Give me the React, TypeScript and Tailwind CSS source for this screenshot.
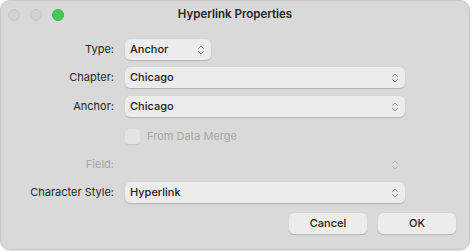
import React from "react";

const Chevrons = ({ muted = false }: { muted?: boolean }) => (
  <svg width="8" height="12" viewBox="0 0 8 12" className={muted ? "text-[#b8b8b8]" : "text-[#8a8a8a]"}>
    <path d="M1.5 4.5 L4 2 L6.5 4.5" fill="none" stroke="currentColor" strokeWidth="1" strokeLinecap="round" strokeLinejoin="round" />
    <path d="M1.5 7.5 L4 10 L6.5 7.5" fill="none" stroke="currentColor" strokeWidth="1" strokeLinecap="round" strokeLinejoin="round" />
  </svg>
);

const Popup = ({ value, wide = true }: { value: string; wide?: boolean }) => (
  <div
    className={`flex h-[21px] items-center justify-between rounded-[5px] bg-[#ececec] pl-[5px] pr-[6px] shadow-[0_0.5px_1px_rgba(0,0,0,0.18)] ${
      wide ? "w-[280px]" : "w-[86px]"
    }`}
  >
    <span className="text-[11px] font-medium text-[#222]">{value}</span>
    <Chevrons />
  </div>
);

const Row = ({ label, muted = false, children, className = "" }: { label: string; muted?: boolean; children: React.ReactNode; className?: string }) => (
  <div className={`flex h-[21px] items-center ${className}`}>
    <div className={`w-[114px] pr-[1px] text-right text-[11px] ${muted ? "text-[#a6a6a6]" : "text-[#262626]"}`}>{label}</div>
    <div className="ml-[10px] flex items-center">{children}</div>
  </div>
);

export default function App() {
  return (
    <div className="h-[252px] w-[474px] bg-white" style={{ fontFamily: "Inter, 'Liberation Sans', sans-serif" }}>
      <div className="flex h-[250px] w-[470px] flex-col rounded-[10px] border border-[#c8c8c8] bg-[#d9d9d9] shadow-[0_1px_2px_rgba(0,0,0,0.12)]">
        {/* title bar */}
        <div className="relative flex h-[28px] items-center justify-center">
          <div className="absolute left-[7px] top-[8px] flex gap-[10px]">
            <span className="h-[12px] w-[12px] rounded-full border border-[#c6c6c6] bg-[#d2d2d2]" />
            <span className="h-[12px] w-[12px] rounded-full border border-[#c6c6c6] bg-[#d2d2d2]" />
            <span className="h-[12px] w-[12px] rounded-full border border-[#39b54a] bg-[#4bc658]" />
          </div>
          <span className="text-[11.5px] font-semibold text-[#262626]">Hyperlink Properties</span>
        </div>

        <div className="flex flex-col pt-[10px]">
          <Row label="Type:">
            <Popup value="Anchor" wide={false} />
          </Row>
          <Row label="Chapter:" className="mt-[7px]">
            <Popup value="Chicago" />
          </Row>
          <Row label="Anchor:" className="mt-[8px]">
            <Popup value="Chicago" />
          </Row>
          <Row label="" className="mt-[9px]">
            <div className="flex items-center gap-[7px]">
              <span className="h-[15px] w-[15px] rounded-[3px] bg-[#e3e3e3] shadow-[0_0.5px_1px_rgba(0,0,0,0.08)]" />
              <span className="text-[11px] text-[#a6a6a6]">From Data Merge</span>
            </div>
          </Row>
          <Row label="Field:" muted className="mt-[7px]">
            <div className="flex w-[280px] justify-end pr-[6px]">
              <Chevrons muted />
            </div>
          </Row>
          <Row label="Character Style:" className="mt-[7px]">
            <Popup value="Hyperlink" />
          </Row>
        </div>

        <div className="mt-[10px] flex justify-end gap-[11px] pr-[13px]">
          <button className="h-[21px] w-[78px] rounded-[5px] bg-[#ececec] text-[11px] font-medium text-[#222] shadow-[0_0.5px_1px_rgba(0,0,0,0.18)]">Cancel</button>
          <button className="h-[21px] w-[78px] rounded-[5px] bg-[#ececec] text-[11px] font-medium text-[#222] shadow-[0_0.5px_1px_rgba(0,0,0,0.18)]">OK</button>
        </div>
      </div>
    </div>
  );
}
